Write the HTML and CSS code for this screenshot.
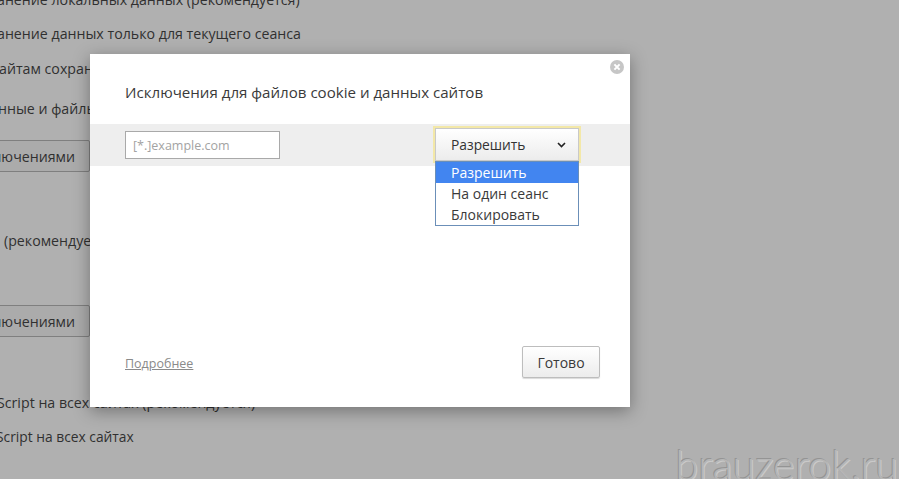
FILE: index.html
```html
<!DOCTYPE html>
<html lang="ru">
<head>
<meta charset="utf-8">
<title>Исключения</title>
<link rel="stylesheet" href="styles.css">
</head>
<body>
<main class="page">
  <p class="line l1">анение локальных данных (рекомендуется)</p>
  <p class="line l2">анение данных только для текущего сеанса</p>
  <p class="line l3">айтам сохранять данные</p>
  <p class="line l4">нные и файлы cookie</p>
  <button class="bg-btn b1" type="button">лючениями</button>
  <p class="line l5">(рекомендуется)</p>
  <button class="bg-btn b2" type="button">лючениями</button>
  <p class="line l6">Script на всех сайтах (рекомендуется)</p>
  <p class="line l7">Script на всех сайтах</p>
</main>

<section class="dialog">
  <svg class="close" width="14" height="14" viewBox="0 0 14 14">
    <circle cx="7" cy="7" r="7" fill="#c6c6c6"/>
    <path d="M4.4 4.4l5.2 5.2M9.6 4.4l-5.2 5.2" stroke="#fff" stroke-width="2"/>
  </svg>
  <h1 class="title">Исключения для файлов cookie и данных сайтов</h1>
  <div class="band">
    <div class="fake-input">[*.]example.com</div>
    <div class="select-wrap">
      <div class="select">
        <span>Разрешить</span>
        <svg class="chev" width="9" height="6" viewBox="0 0 9 6"><path d="M1 1l3.5 3.5L8 1" fill="none" stroke="#222" stroke-width="1.6"/></svg>
      </div>
      <ul class="menu">
        <li class="item active">Разрешить</li>
        <li class="item">На один сеанс</li>
        <li class="item">Блокировать</li>
      </ul>
    </div>
  </div>
  <div class="footer">
    <a class="more" href="#">Подробнее</a>
    <button class="done" type="button">Готово</button>
  </div>
</section>

<div class="mark">brauzerok.ru</div>
</body>
</html>
```

FILE: styles.css
```css
* { box-sizing: border-box; }
html, body { margin: 0; height: 100%; }
body {
  width: 899px;
  height: 479px;
  overflow: hidden;
  position: relative;
  background: #b0b0b0;
  font-family: "Open Sans", "Noto Sans", sans-serif;
  color: #2b2b2b;
}
.page { display: flex; flex-direction: column; align-items: flex-start; }
.line { margin: 0; font-size: 14.2px; line-height: 20px; white-space: nowrap; color: #303030; }
.l1 { margin-top: -10px; margin-left: -3px; }
.l2 { margin-top: 14px; margin-left: -3px; }
.l3 { margin-top: 15px; margin-left: -1px; }
.l4 { margin-top: 20px; margin-left: -2px; }
.l5 { margin-top: 59px; margin-left: 4px; }
.l6 { margin-top: 56px; margin-left: -3px; }
.l7 { margin-top: 14px; margin-left: -4px; font-size: 13.8px; }
.bg-btn {
  width: 150px;
  height: 32px;
  margin: 21px 0 0 -60px;
  padding: 0 14px 0 0;
  text-align: right;
  font: 14.2px "Open Sans", "Noto Sans", sans-serif;
  color: #303030;
  background: #ababab;
  border: 1px solid #7f7f7f;
  border-radius: 2px;
}
.b2 { margin-top: 54px; }
.dialog {
  position: absolute;
  left: 90px;
  top: 54px;
  width: 540px;
  height: 353px;
  background: #fff;
  box-shadow: 0 4px 16px rgba(0,0,0,.35);
  display: flex;
  flex-direction: column;
}
.close { position: absolute; top: 6px; right: 6px; }
.title {
  margin: 27px 0 0 35px;
  font-size: 15.1px;
  line-height: 22px;
  font-weight: 400;
  color: #3a3a3a;
}
.band {
  margin-top: 21px;
  height: 42px;
  background: #eeeeee;
  padding: 7px 51px 0 35px;
  display: flex;
  justify-content: space-between;
  align-items: flex-start;
}
.fake-input {
  width: 155px;
  height: 28px;
  background: #fff;
  border: 1px solid #a9a9a9;
  padding-left: 7px;
  font-size: 12.5px;
  line-height: 27px;
  color: #a3a3a3;
}
.select-wrap { position: relative; width: 144px; margin-top: -3px; }
.select {
  height: 33px;
  border: 1px solid #c9c9c9;
  background: linear-gradient(#fff, #ececec);
  box-shadow: 0 0 0 2px #f3e8a8;
  display: flex;
  align-items: center;
  justify-content: space-between;
  padding: 0 12px 0 15px;
  font-size: 13.8px;
  color: #333;
}
.chev { display: block; }
.menu {
  position: absolute;
  left: 0;
  top: 33px;
  width: 144px;
  margin: 0;
  padding: 0;
  list-style: none;
  background: #fff;
  border: 1px solid #6b8fb8;
}
.item { height: 21px; padding-left: 15px; font-size: 14px; line-height: 21px; color: #3a3a3a; }
.item.active { background: #4285f0; color: #fff; }
.footer {
  margin-top: auto;
  padding: 0 30px 29px 35px;
  display: flex;
  justify-content: space-between;
  align-items: center;
}
.more { font-size: 12.5px; line-height: 18px; margin-top: 4px; color: #8a8a8a; text-decoration: underline; }
.done {
  width: 78px;
  height: 32px;
  padding: 0;
  font: 14px "Open Sans", "Noto Sans", sans-serif;
  color: #3a3a3a;
  background: linear-gradient(#fff, #ececec);
  border: 1px solid #bdbdbd;
  border-radius: 2px;
  box-shadow: 0 1px 1px rgba(0,0,0,.15);
}
.mark {
  position: absolute;
  right: 1px;
  bottom: -8px;
  font-family: "Lato", sans-serif;
  font-weight: 300;
  font-size: 41.4px;
  line-height: 46px;
  color: #b6b6b6;
  text-shadow: -1px -1px 0 #949494, 1px 1px 0 #cacaca;
}
```
